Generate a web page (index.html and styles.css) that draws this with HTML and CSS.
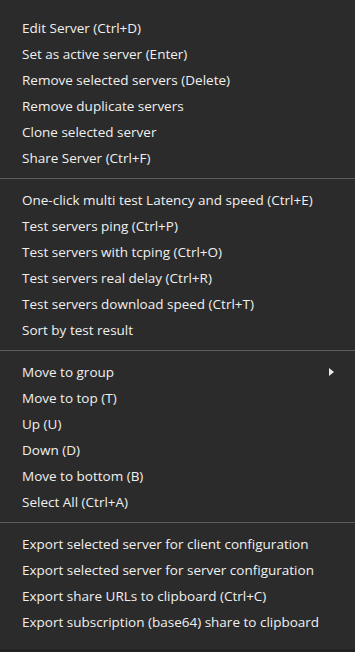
FILE: index.html
```html
<!DOCTYPE html>
<html>
<head>
<meta charset="utf-8">
<link rel="stylesheet" href="styles.css">
</head>
<body>
<div class="menu">
  <div class="group">
    <div class="item">Edit Server (Ctrl+D)</div>
    <div class="item">Set as active server (Enter)</div>
    <div class="item">Remove selected servers (Delete)</div>
    <div class="item">Remove duplicate servers</div>
    <div class="item">Clone selected server</div>
    <div class="item">Share Server (Ctrl+F)</div>
  </div>
  <div class="sep"></div>
  <div class="group">
    <div class="item">One-click multi test Latency and speed (Ctrl+E)</div>
    <div class="item">Test servers ping (Ctrl+P)</div>
    <div class="item">Test servers with tcping (Ctrl+O)</div>
    <div class="item">Test servers real delay (Ctrl+R)</div>
    <div class="item">Test servers download speed (Ctrl+T)</div>
    <div class="item">Sort by test result</div>
  </div>
  <div class="sep"></div>
  <div class="group">
    <div class="item submenu">Move to group<span class="arrow"></span></div>
    <div class="item">Move to top (T)</div>
    <div class="item">Up (U)</div>
    <div class="item">Down (D)</div>
    <div class="item">Move to bottom (B)</div>
    <div class="item">Select All (Ctrl+A)</div>
  </div>
  <div class="sep"></div>
  <div class="group">
    <div class="item">Export selected server for client configuration</div>
    <div class="item">Export selected server for server configuration</div>
    <div class="item">Export share URLs to clipboard (Ctrl+C)</div>
    <div class="item">Export subscription (base64) share to clipboard</div>
  </div>
</div>
</body>
</html>
```
FILE: styles.css
```css
html, body {
  margin: 0;
  padding: 0;
  background: #2b2b2b;
}
.menu {
  width: 355px;
  height: 652px;
  box-sizing: border-box;
  background: #2b2b2b;
  padding-top: 15px;
  border-bottom: 3px solid #222222;
  font-family: "Open Sans", "Noto Sans", sans-serif;
  font-size: 13.5px;
  color: #f0f0f0;
}
.item {
  height: 26px;
  line-height: 26px;
  padding-left: 22px;
  padding-right: 22px;
  white-space: nowrap;
  display: flex;
  align-items: center;
}
.submenu {
  justify-content: space-between;
}
.arrow {
  width: 0;
  height: 0;
  border-top: 4.5px solid transparent;
  border-bottom: 4.5px solid transparent;
  border-left: 5px solid #e8e8e8;
  margin-right: -1px;
}
.sep {
  height: 1px;
  background: #5c5c5c;
  margin: 7px 0 8px 0;
}
```
